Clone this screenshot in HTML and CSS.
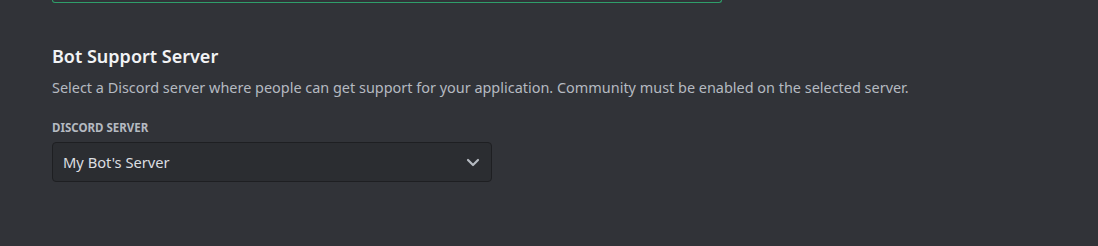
FILE: index.html
```html
<!DOCTYPE html>
<html lang="en">
<head>
  <meta charset="UTF-8" />
  <title>Bot Support Server</title>
  <link rel="stylesheet" href="styles.css">
</head>
<body>
  <div class="content">
    <div class="prev-field"></div>

    <section class="setting">
      <h2>Bot Support Server</h2>
      <p class="hint">Select a Discord server where people can get support for your application. Community must be enabled on the selected server.</p>

      <label class="field-label">Discord Server</label>
      <div class="select">
        <span class="select-value">My Bot's Server</span>
        <svg class="chevron" width="20" height="20" viewBox="0 0 20 20">
          <path d="M5 8l5 5 5-5" fill="none" stroke="currentColor" stroke-width="2.2" stroke-linecap="round" stroke-linejoin="round"/>
        </svg>
      </div>
    </section>
  </div>
</body>
</html>
```

FILE: styles.css
```css
body {
  margin: 0;
  background: #313338;
  font-family: 'Noto Sans', 'Open Sans', sans-serif;
  color: #dbdee1;
  height: 246px;
  overflow: hidden;
}

.content {
  padding-left: 52px;
}

.prev-field {
  width: 668px;
  height: 2px;
  border: 1px solid #2f9e6a;
  border-top: none;
  border-radius: 0 0 4px 4px;
}

.setting {
  padding-top: 41px;
}

.setting h2 {
  margin: 0;
  font-size: 18px;
  line-height: 24px;
  font-weight: 600;
  color: #f2f3f5;
}

.hint {
  margin: 10px 0 0;
  font-size: 14.45px;
  line-height: 20px;
  color: #b5bac1;
}

.field-label {
  display: block;
  margin-top: 22px;
  font-size: 11.5px;
  line-height: 16px;
  font-weight: 700;
  text-transform: uppercase;
  color: #b5bac1;
}

.select {
  margin-top: 6px;
  width: 440px;
  height: 40px;
  box-sizing: border-box;
  display: flex;
  align-items: center;
  justify-content: space-between;
  padding: 0 8px 0 10px;
  background: #2b2d31;
  border: 1px solid #1e1f22;
  border-radius: 4px;
}

.select-value {
  font-size: 14.7px;
}

.chevron {
  color: #b5bac1;
}
```
